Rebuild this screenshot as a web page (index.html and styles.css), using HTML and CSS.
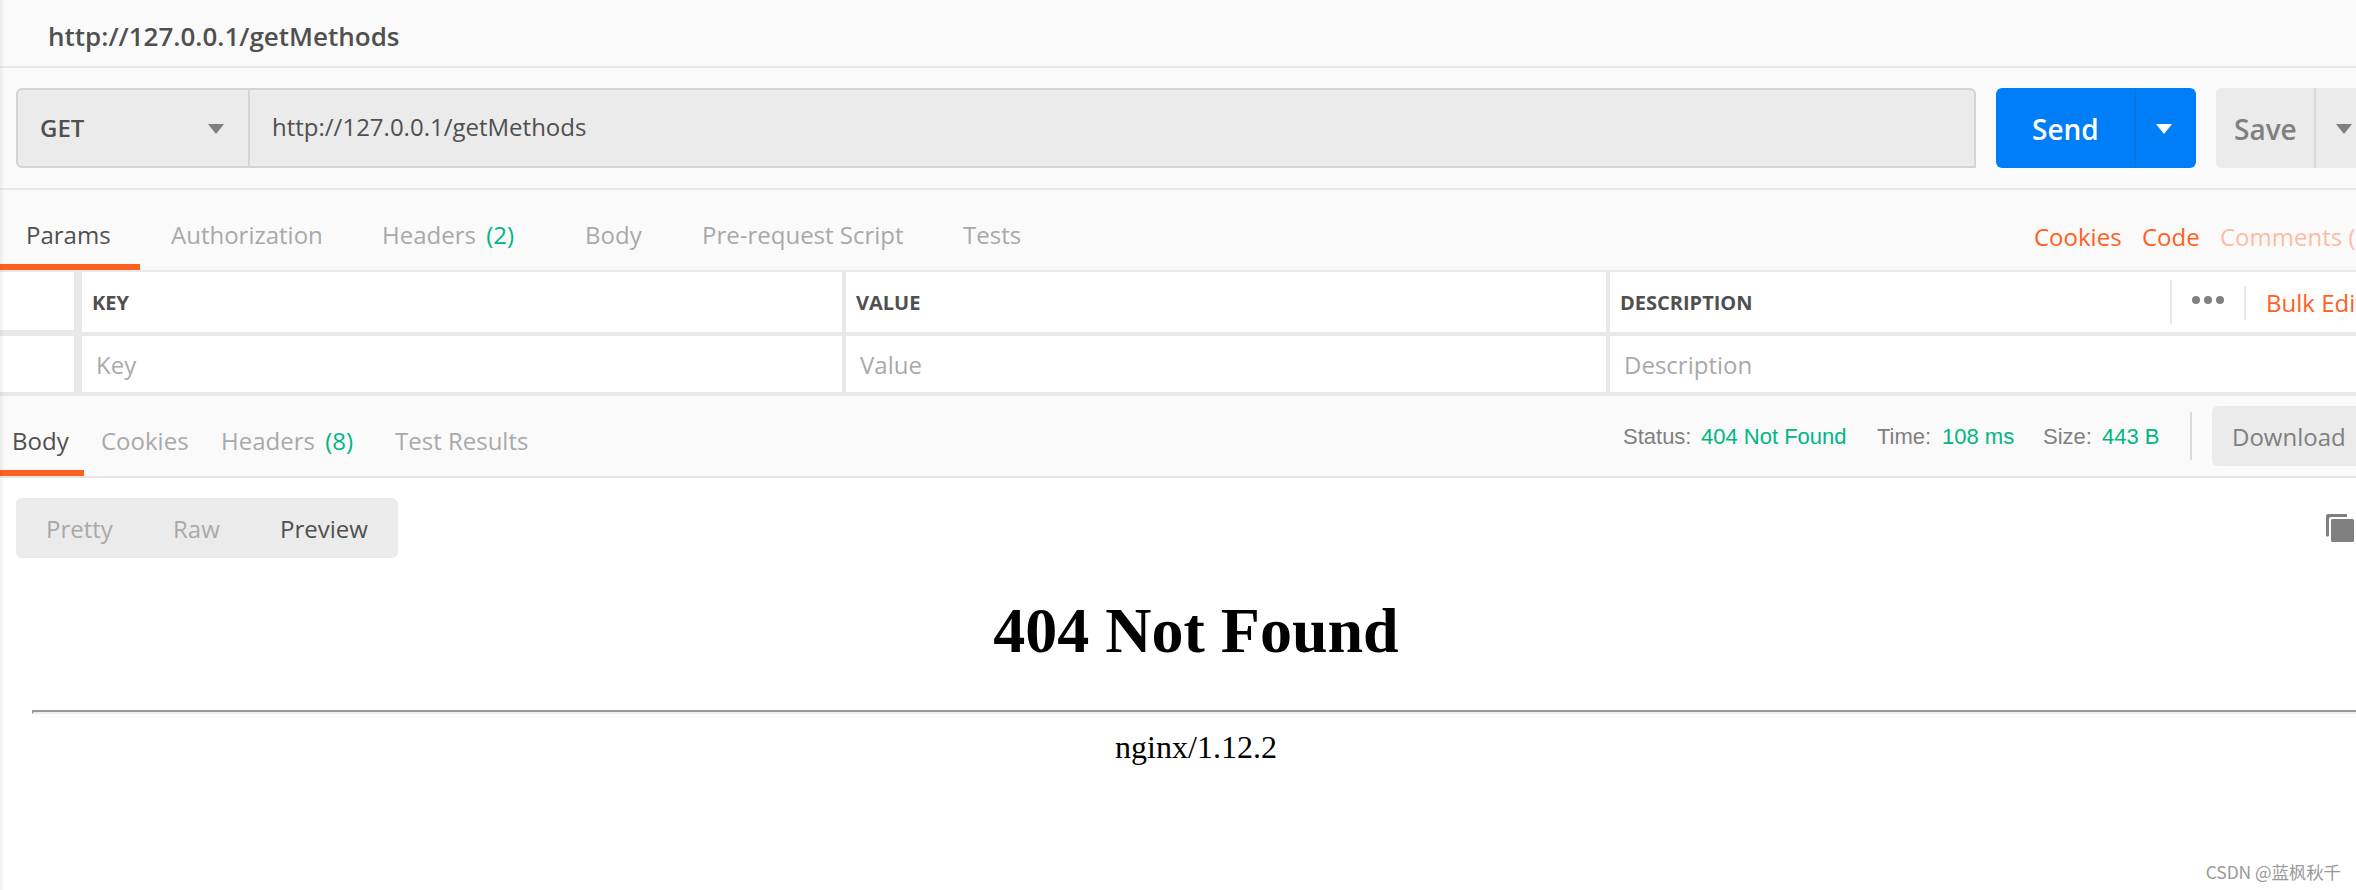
FILE: index.html
```html
<!DOCTYPE html>
<html lang="en">
<head>
<meta charset="utf-8">
<title>http://127.0.0.1/getMethods</title>
<link rel="stylesheet" href="styles.css">
</head>
<body>
<div class="app">
  <header class="title">http://127.0.0.1/getMethods</header>
  <section class="request">
    <div class="address">
      <div class="method"><span>GET</span><svg class="caret" width="16" height="10" viewBox="0 0 16 10"><path d="M0 0H16L8 10Z" fill="#808080"/></svg></div>
      <div class="url">http://127.0.0.1/getMethods</div>
    </div>
    <div class="btn send"><span class="btn-label">Send</span><span class="btn-drop"><svg width="16" height="10" viewBox="0 0 16 10"><path d="M0 0H16L8 10Z" fill="#fff"/></svg></span></div>
    <div class="btn save"><span class="btn-label">Save</span><span class="btn-drop"><svg width="16" height="10" viewBox="0 0 16 10"><path d="M0 0H16L8 10Z" fill="#808080"/></svg></span></div>
  </section>
  <nav class="tabs">
    <div class="tab active t-params">Params</div>
    <div class="tab t-auth">Authorization</div>
    <div class="tab t-headers">Headers <b>(2)</b></div>
    <div class="tab t-body">Body</div>
    <div class="tab t-pre">Pre-request Script</div>
    <div class="tab t-tests">Tests</div>
    <div class="links"><span class="l-cookies">Cookies</span><span class="l-code">Code</span><span class="l-comments">Comments (</span></div>
  </nav>
  <section class="grid">
    <div class="cell check head"></div>
    <div class="cell head">KEY</div>
    <div class="cell head">VALUE</div>
    <div class="cell head desc"><span class="desc-label">DESCRIPTION</span>
      <span class="more"><i></i><i></i><i></i></span><span class="bulk">Bulk Edit</span></div>
    <div class="cell check"></div>
    <div class="cell">Key</div>
    <div class="cell">Value</div>
    <div class="cell">Description</div>
  </section>
  <nav class="response">
    <div class="tab active r-body">Body</div>
    <div class="tab r-cookies">Cookies</div>
    <div class="tab r-headers">Headers <b>(8)</b></div>
    <div class="tab r-tests">Test Results</div>
    <div class="status">
      <span class="s-status">Status:</span><b class="s-code">404 Not Found</b>
      <span class="s-time">Time:</span><b class="s-ms">108 ms</b>
      <span class="s-size">Size:</span><b class="s-bytes">443 B</b>
    </div>
    <div class="download">Download</div>
  </nav>
  <main class="viewer">
    <div class="toolbar">
      <div class="modes"><span class="m-pretty">Pretty</span><span class="m-raw">Raw</span><span class="m-preview">Preview</span></div>
      <svg class="copy" width="30" height="28" viewBox="0 0 30 28"><path d="M0 21.5V2Q0 0 2 0H20.5Q21 0 21 .5V2.5Q21 3 20.500 3H5Q3 3 3 5V21.500Q3 22.500 2 22.500H1Q0 22.500 0 21.500Z" fill="#808080"/><rect x="5" y="5" width="23" height="23" rx="1.500" fill="#808080"/></svg>
    </div>
    <div class="page">
      <h1>404 Not Found</h1>
      <hr>
      <p>nginx/1.12.2</p>
    </div>
  </main>
  <div class="edge"></div>
  <div class="watermark">CSDN @蓝枫秋千</div>
</div>
</body>
</html>
```
FILE: styles.css
```css
* { box-sizing: border-box; }
body { margin: 0; background: #fff; font: 24px/32px "Open Sans", sans-serif; color: #505050; }
.app { position: relative; width: 2356px; height: 890px; overflow: hidden; white-space: nowrap; }
b { font-weight: 400; color: #00b684; }
svg { display: block; flex: none; }

.title { height: 68px; padding: 20px 0 0 48px; border-bottom: 2px solid #e9e9e9; background: #fafafa; font-size: 26px; font-weight: 600; }

.request { display: flex; height: 122px; padding: 20px 0 0 16px; border-bottom: 2px solid #e9e9e9; background: #fafafa; }
.address { display: flex; flex: none; width: 1960px; height: 80px; border: 2px solid #d4d4d4; border-radius: 6px 6px 0 6px; background: #ebebeb; }
.method { display: flex; justify-content: space-between; width: 232px; padding: 22px 24px 0 22px; border-right: 2px solid #d4d4d4; font-weight: 600; }
.caret { margin-top: 12px; }
.url { padding: 21px 0 0 22px; }
.btn { display: flex; flex: none; height: 80px; margin-left: 20px; border-radius: 6px; font-size: 28px; font-weight: 600; }
.btn-label { padding: 25px 0 0 36px; }
.btn-drop { padding: 36px 0 0 20px; border-left: 2px solid; }
.send { width: 200px; background: #007ef8; color: #fff; }
.send .btn-label { width: 138px; }
.send .btn-drop { border-color: #0873e2; }
.save { width: 160px; background: #ebebeb; color: #808080; }
.save .btn-label { width: 98px; padding-left: 18px; }
.save .btn-drop { border-color: #d9d9d9; }

.tabs, .response { display: flex; border-bottom: 2px solid #e9e9e9; background: #fafafa; color: #a9a9a9; }
.tabs { height: 82px; }
.tab { flex: none; padding-top: 29px; }
.tab.active { border-bottom: 6px solid #ff6022; color: #505050; }
.tab b { margin-left: 4px; }
.t-params { width: 140px; padding-left: 26px; }
.t-auth { width: 242px; padding-left: 31px; }
.t-headers { width: 203px; }
.t-body { width: 117px; }
.t-pre { width: 261px; }
.links { display: flex; margin-left: auto; padding-top: 31px; width: 322px; color: #ff6022; }
.links span { flex: none; }
.l-cookies { width: 108px; }
.l-code { width: 78px; }
.l-comments { opacity: .4; }

.grid { display: grid; grid-template-columns: 82px 764px 764px 746px; grid-template-rows: 64px 60px; background: #fff; color: #a9a9a9; }
.cell { border-right: 4px solid #e9e9e9; border-bottom: 4px solid #e9e9e9; padding: 13px 0 0 14px; }
.cell:nth-child(4n) { border-right: 0; }
.cell.check { border-right-width: 8px; }
.head { padding: 15px 0 0 10px; font-size: 20px; font-weight: 700; color: #505050; }
.head.check { border-bottom-width: 6px; }
.head.desc { display: flex; padding: 0 0 0 10px; }
.desc-label { flex: none; width: 550px; padding-top: 15px; }
.more { display: flex; flex: none; gap: 4px; width: 74px; height: 44px; margin-top: 8px; padding: 16px 0 0 20px; border-left: 2px solid #e9e9e9; }
.more i { width: 8px; height: 8px; border-radius: 50%; background: #808080; }
.bulk { flex: none; height: 34px; margin-top: 14px; padding: 0 0 0 20px; border-left: 2px solid #e9e9e9; font-size: 24px; font-weight: 400; line-height: 34px; color: #ff6022; }

.response { height: 82px; }
.r-body { width: 84px; padding-left: 12px; }
.r-cookies { width: 137px; padding-left: 17px; }
.r-headers { width: 174px; }
.status { display: flex; width: 569px; height: 48px; margin: 16px 0 0 auto; padding-top: 9px; border-right: 2px solid #d9d9d9; font: 22px/32px "Liberation Sans", Arial, sans-serif; color: #808080; }
.status span, .status b { flex: none; }
.s-status { width: 78px; }
.s-code { width: 176px; }
.s-time { width: 65px; }
.s-ms { width: 101px; }
.s-size { width: 59px; }
.download { width: 144px; height: 60px; margin: 10px 0 0 20px; padding: 15px 0 0 20px; border-radius: 6px 0 0 6px; background: #ebebeb; color: #808080; }

.toolbar { display: flex; justify-content: space-between; height: 80px; padding: 20px 0 0 16px; }
.modes { display: flex; width: 382px; height: 60px; padding: 15px 0 0 30px; border-radius: 6px; background: #ebebeb; color: #a9a9a9; }
.m-pretty { width: 127px; }
.m-raw { width: 107px; }
.m-preview { color: #505050; }
.copy { margin-top: 16px; }
.page { width: 2328px; margin-left: 32px; font-family: "Liberation Serif", "Times New Roman", serif; color: #000; text-align: center; }
h1 { margin: 0; padding-top: 36px; height: 152px; font-size: 64px; line-height: 74px; }
hr { height: 4px; margin: 0; border: solid; border-width: 2px 0 2px 2px; border-color: #9a9a9a #eee #eee #9a9a9a; }
p { margin: 15px 0 0; font-size: 32px; line-height: 36px; }
.edge { position: absolute; left: 0; top: 0; width: 5px; height: 890px; background: linear-gradient(90deg, rgba(0,0,0,.06), transparent); }
.watermark { position: absolute; right: 15px; top: 856px; font: 17.500px/32px "Noto Sans CJK SC", sans-serif; letter-spacing: -.1px; color: #999; }
```
